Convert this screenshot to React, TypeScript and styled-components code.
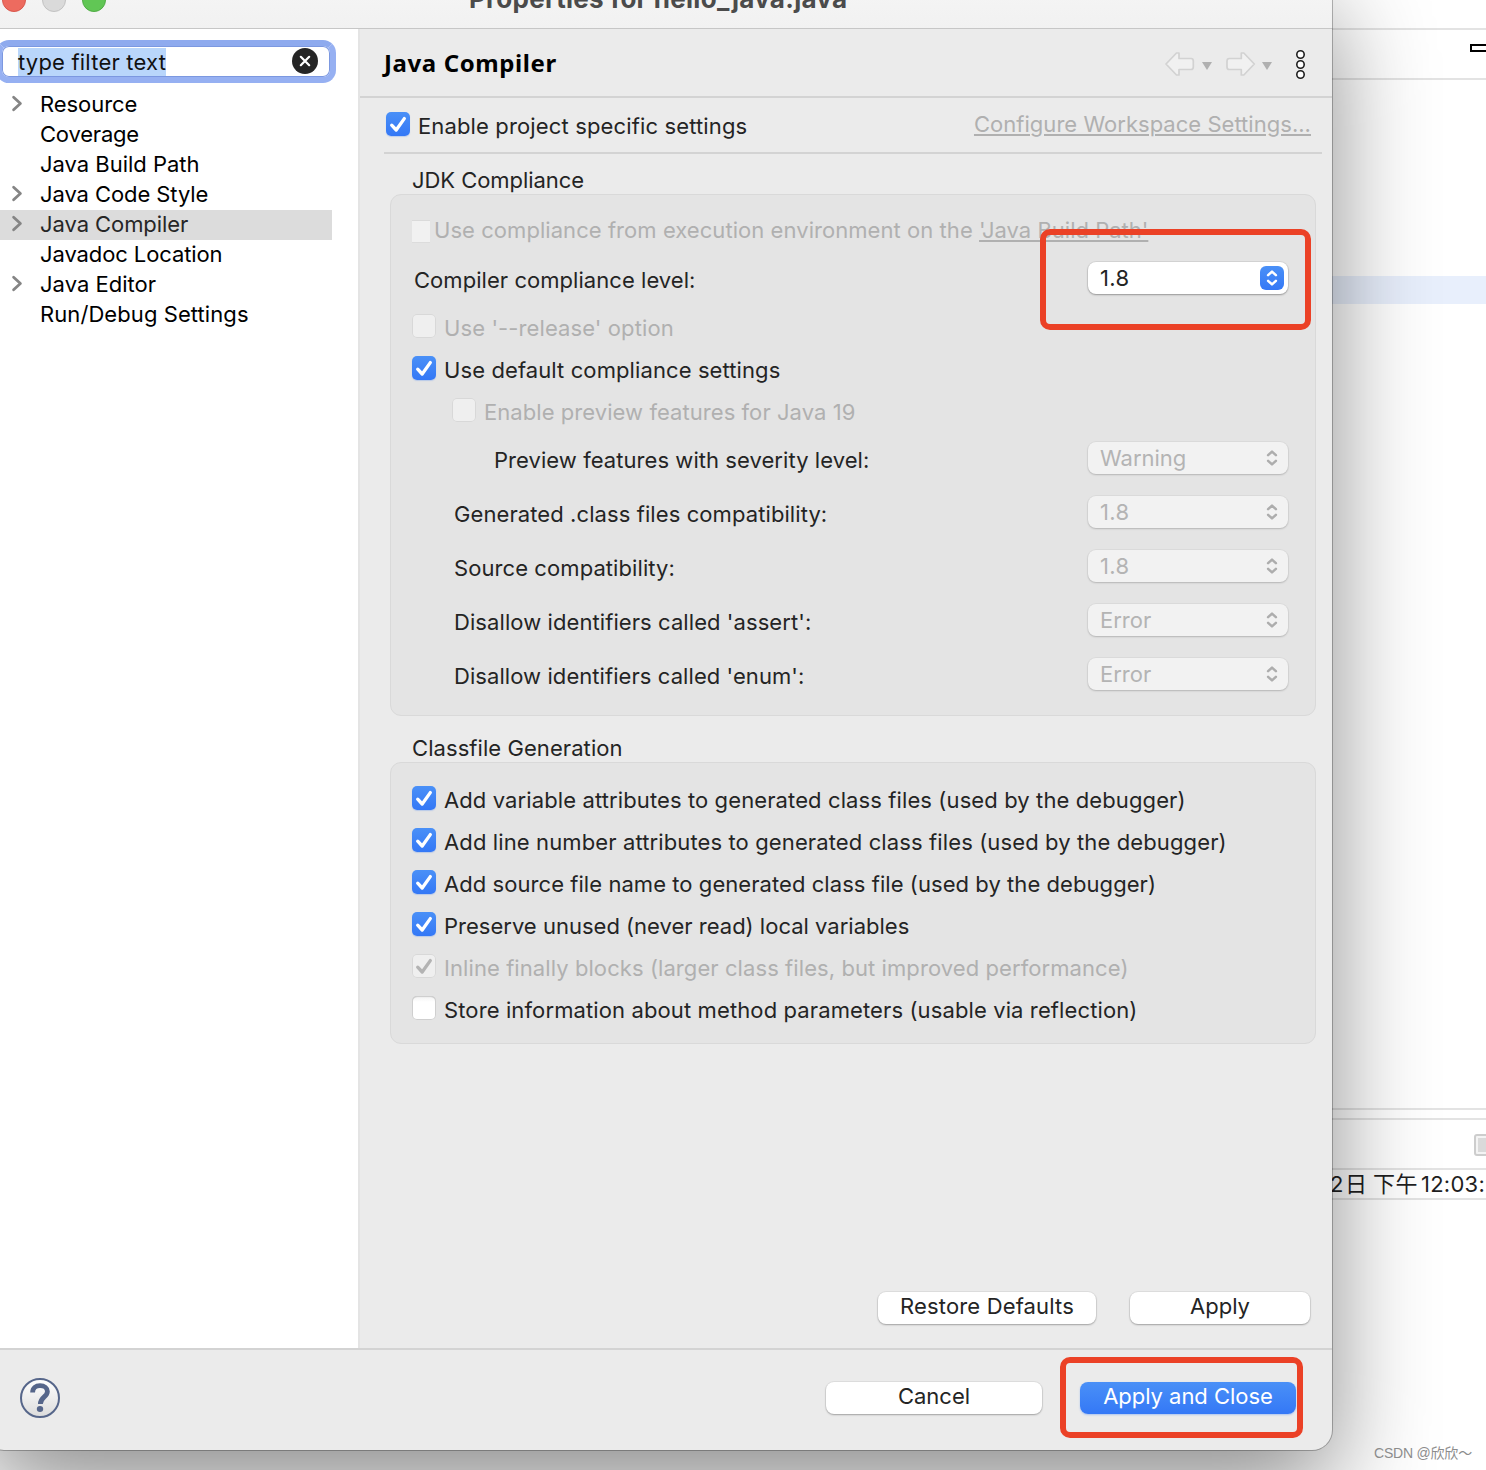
import React from 'react';
import styled, { createGlobalStyle } from 'styled-components';

const uiFont = 'Inter, "Noto Sans CJK SC", sans-serif';

const GlobalStyle = createGlobalStyle`
  *, *::before, *::after { box-sizing: border-box; }
  body { margin: 0; background: #ffffff; overflow: hidden; }
`;

/* ---------- desktop ---------- */

const Desktop = styled.div`
  position: relative;
  width: 1486px;
  height: 1470px;
  overflow: hidden;
  background: #ffffff;
  font: 400 22px/28px ${uiFont};
  color: #242424;
  white-space: nowrap;
`;

const Workbench = styled.div`
  display: flex;
  flex-direction: column;
  margin-left: 1320px;
  height: 1470px;
`;

const WorkbenchRow = styled.div<{ $h: number; $line?: boolean; $bg?: string }>`
  flex: none;
  display: flex;
  justify-content: flex-end;
  height: ${(p) => p.$h}px;
  background: ${(p) => p.$bg ?? 'transparent'};
  border-bottom: ${(p) => (p.$line ? '2px solid #e3e3e3' : 'none')};
`;

const MinimizeIcon = styled.svg`
  width: 16px;
  height: 8px;
  margin-top: 14px;
`;

const ToolIcon = styled.svg`
  width: 12px;
  height: 22px;
  margin-top: 14px;
`;

const ConsoleText = styled.div`
  display: flex;
  width: 156px;
  color: #1f1f1f;
`;

const ConsolePart = styled.span<{ $w?: number; $ls?: number }>`
  width: ${(p) => (p.$w ? `${p.$w}px` : 'auto')};
  letter-spacing: ${(p) => p.$ls ?? 0}px;
  line-height: 28px;
`;

const Watermark = styled.div`
  position: absolute;
  left: 1374px;
  top: 1443px;
  font: 400 14px/20px "Liberation Sans", "Noto Sans CJK SC", sans-serif;
  color: #8c8c8c;
  letter-spacing: -0.2px;
`;

/* ---------- dialog window ---------- */

const Dialog = styled.div`
  position: absolute;
  left: -16px;
  top: -24px;
  width: 1348px;
  height: 1474px;
  display: flex;
  flex-direction: column;
  background: #ebebeb;
  border-radius: 20px;
  box-shadow: 0 0 0 1px rgba(0, 0, 0, 0.26), 0 36px 100px rgba(0, 0, 0, 0.46);
`;

const TitleBar = styled.div`
  flex: none;
  display: flex;
  align-items: center;
  height: 53px;
  padding: 0 0 4px 18px;
  border-radius: 20px 20px 0 0;
  background: linear-gradient(#f6f6f6, #f1f1f1);
  border-bottom: 1px solid #c6c6c6;
`;

const Light = styled.span<{ $fill: string; $edge: string }>`
  width: 24px;
  height: 24px;
  margin-right: 16px;
  border-radius: 50%;
  background: ${(p) => p.$fill};
  border: 1px solid ${(p) => p.$edge};
`;

const Title = styled.div`
  margin: 0 0 2px 347px;
  font-size: 26px;
  font-weight: 700;
  line-height: 32px;
  letter-spacing: 0.26px;
  color: #4b4b4b;
`;

const Body = styled.div`
  flex: none;
  display: flex;
  height: 1319px;
  padding-left: 16px;
  background: #ffffff;
`;

const Sidebar = styled.div`
  flex: none;
  width: 358px;
  padding-top: 11px;
`;

const SearchField = styled.div`
  display: flex;
  align-items: center;
  justify-content: space-between;
  width: 340px;
  height: 43px;
  margin-left: -4px;
  padding: 0 12px 0 16px;
  background: #ffffff;
  border: 6px solid #96b0f2;
  border-top-color: #8eaaee;
  border-radius: 13px;
  box-shadow: inset 0 0 0 1px #7c98e0;
`;

const SearchText = styled.span`
  height: 28px;
  background: #b9d6fb;
  color: #111111;
  letter-spacing: 0.2px;
`;

const ClearIcon = styled.svg`
  width: 26px;
  height: 26px;
  margin-top: -2px;
`;

const Tree = styled.div`
  display: flex;
  flex-direction: column;
  margin-top: 7px;
`;

const TreeRow = styled.div<{ $selected?: boolean }>`
  display: flex;
  width: 332px;
  height: 30px;
  background: ${(p) => (p.$selected ? '#dcdcdc' : 'transparent')};
  color: ${(p) => (p.$selected ? '#262626' : '#000000')};
`;

const TreeArrow = styled.svg`
  flex: none;
  width: 40px;
  height: 30px;
`;

const Text = styled.span<{ $ls?: number; $dim?: boolean; $link?: boolean }>`
  letter-spacing: ${(p) => p.$ls ?? 0.06}px;
  color: ${(p) => (p.$dim ? '#b0b0b0' : 'inherit')};
  text-decoration: ${(p) => (p.$link ? 'underline' : 'none')};
  text-decoration-thickness: 2px;
  text-underline-offset: 2px;
  text-decoration-skip-ink: auto;
`;

const Page = styled.div`
  flex: 1;
  display: flex;
  flex-direction: column;
  background: #ebebeb;
  border-left: 2px solid #e4e4e4;
`;

const PageHeader = styled.div`
  flex: none;
  display: flex;
  justify-content: space-between;
  height: 69px;
  padding-left: 24px;
  border-bottom: 2px solid #d3d3d3;
`;

const PageTitle = styled.h1`
  margin: 17px 0 0;
  font: 700 24px/34px "Noto Sans", sans-serif;
  letter-spacing: 0.6px;
  color: #000000;
`;

const HeaderTools = styled.svg`
  width: 172px;
  height: 62px;
`;

const EnableRow = styled.div`
  flex: none;
  display: flex;
  justify-content: space-between;
  height: 56px;
  margin: 0 10px 0 24px;
  padding: 14px 11px 0 2px;
  border-bottom: 2px solid #d3d3d3;
`;

const LinkSlot = styled.div`
  margin-top: -2px;
`;

const GroupTitle = styled.div<{ $top: number }>`
  margin: ${(p) => p.$top}px 0 0 52px;
  height: 28px;
`;

const GroupBox = styled.div<{ $h: number }>`
  flex: none;
  display: flex;
  flex-direction: column;
  width: 926px;
  height: ${(p) => p.$h}px;
  margin-left: 30px;
  padding: 0 27px 0 21px;
  background: #e4e4e4;
  border: 1px solid #d9d9d9;
  border-radius: 11px;
`;

const CheckRow = styled.div<{ $top?: number; $indent?: number }>`
  display: flex;
  gap: 8px;
  height: 28px;
  margin-top: ${(p) => p.$top ?? 0}px;
  margin-left: ${(p) => p.$indent ?? 0}px;
`;

const EnvRow = styled(CheckRow)`
  gap: 4px;
`;

const EnvBox = styled.span`
  width: 18px;
  height: 23px;
  margin-top: 4px;
  background: #f1f1f1;
  border-top: 1px solid #dadada;
  border-bottom: 1px solid #dcdcdc;
`;

const Box = styled.span<{ $on?: boolean; $dim?: boolean }>`
  flex: none;
  display: flex;
  width: 24px;
  height: 24px;
  border-radius: 5px;
  background: ${(p) =>
    p.$dim
      ? '#efefef'
      : p.$on
        ? 'linear-gradient(#4a90f7, #3478f6)'
        : 'linear-gradient(#f2f2f2, #ffffff 6px)'};
  box-shadow: ${(p) =>
    p.$dim
      ? 'inset 0 0 0 1px #d8d8d8'
      : p.$on
        ? '0 1px 1px rgba(52, 120, 246, 0.25)'
        : 'inset 0 0 0 1px #cfcfcf, inset 0 1px 1px #bdbdbd'};
`;

const FieldRow = styled.div<{ $top: number; $indent?: number; $drop: number }>`
  display: flex;
  justify-content: space-between;
  height: 32px;
  margin-top: ${(p) => p.$top}px;
  padding-left: ${(p) => p.$indent ?? 0}px;

  > span {
    margin-top: ${(p) => p.$drop}px;
  }
`;

const Combo = styled.div<{ $dim?: boolean; $ls?: number }>`
  display: flex;
  justify-content: space-between;
  width: 200px;
  height: 32px;
  padding: 2px 4px 2px 12px;
  border-radius: 8px;
  letter-spacing: ${(p) => p.$ls ?? 0}px;
  background: ${(p) => (p.$dim ? '#f2f2f2' : '#ffffff')};
  color: ${(p) => (p.$dim ? '#b4b4b4' : '#242424')};
  box-shadow: 0 0 0 1px rgba(0, 0, 0, ${(p) => (p.$dim ? 0.03 : 0.06)}),
    0 1px 2px rgba(0, 0, 0, ${(p) => (p.$dim ? 0.18 : 0.3)});
`;

const Stepper = styled.svg<{ $dim?: boolean }>`
  width: 24px;
  height: 24px;
  margin-top: 2px;
  border-radius: 6px;
  background: ${(p) => (p.$dim ? 'none' : 'linear-gradient(#4a90f7, #3478f6)')};
`;

const PageButtons = styled.div`
  display: flex;
  justify-content: flex-end;
  gap: 34px;
  margin: auto 22px 24px 0;
`;

const Button = styled.button<{ $w: number; $primary?: boolean; $ls?: number }>`
  width: ${(p) => p.$w}px;
  height: 32px;
  padding: 0 0 4px;
  border: 0;
  border-radius: 8px;
  font: inherit;
  letter-spacing: ${(p) => p.$ls ?? 0}px;
  color: ${(p) => (p.$primary ? '#ffffff' : '#242424')};
  background: ${(p) => (p.$primary ? 'linear-gradient(#4a90f7, #3478f6)' : '#ffffff')};
  box-shadow: ${(p) =>
    p.$primary
      ? '0 1px 2px rgba(52, 120, 246, 0.35)'
      : '0 0 0 1px rgba(0, 0, 0, 0.05), 0 1px 2px rgba(0, 0, 0, 0.28)'};
`;

const Footer = styled.div`
  flex: 1;
  display: flex;
  justify-content: space-between;
  padding: 28px 36px 0 36px;
  border-top: 2px solid #d3d3d3;
`;

const HelpIcon = styled.svg`
  width: 40px;
  height: 40px;
`;

const FooterButtons = styled.div`
  display: flex;
  gap: 38px;
  margin-top: 4px;
`;

/* ---------- hand-drawn marks over the dialog ---------- */

const Highlight = styled.div<{ $x: number; $y: number; $w: number; $h: number }>`
  position: absolute;
  left: ${(p) => p.$x}px;
  top: ${(p) => p.$y}px;
  width: ${(p) => p.$w}px;
  height: ${(p) => p.$h}px;
  border: 6px solid #eb4126;
  border-radius: 10px;
`;

/* ---------- parts ---------- */

const CheckBox = ({ on, dim }: { on?: boolean; dim?: boolean }) => (
  <Box $on={on} $dim={dim}>
    {on && (
      <svg width="24" height="24" viewBox="0 0 24 24" fill="none">
        <path
          d="M5.7 13.2 L10.2 18 L18.3 6.6"
          stroke={dim ? '#b3b3b3' : '#ffffff'}
          strokeWidth="3.3"
          strokeLinecap="round"
          strokeLinejoin="round"
        />
      </svg>
    )}
  </Box>
);

type CheckProps = {
  label: string;
  on?: boolean;
  dim?: boolean;
  top?: number;
  indent?: number;
  ls?: number;
};

const Check = ({ label, on, dim, top, indent, ls }: CheckProps) => (
  <CheckRow $top={top} $indent={indent}>
    <CheckBox on={on} dim={dim} />
    <Text $dim={dim} $ls={ls}>{label}</Text>
  </CheckRow>
);

const Select = ({ value, dim }: { value: string; dim?: boolean }) => (
  <Combo $dim={dim} $ls={value === '1.8' ? 0.3 : 0}>
    {value}
    <Stepper
      $dim={dim}
      viewBox="0 0 24 24"
      fill="none"
      stroke={dim ? '#adadad' : '#ffffff'}
      strokeWidth="2.5"
      strokeLinecap="round"
      strokeLinejoin="round"
    >
      <path d="M8.1 9.2 L12 5.6 L15.9 9.2 M8.1 14.8 L12 18.4 L15.9 14.8" />
    </Stepper>
  </Combo>
);

const treeItems = [
  { label: 'Resource', branch: true, ls: -0.05 },
  { label: 'Coverage', ls: -0.2 },
  { label: 'Java Build Path', ls: -0.02 },
  { label: 'Java Code Style', branch: true, ls: -0.08 },
  { label: 'Java Compiler', branch: true, selected: true, ls: -0.07 },
  { label: 'Javadoc Location', ls: -0.1 },
  { label: 'Java Editor', branch: true, ls: 0.02 },
  { label: 'Run/Debug Settings', ls: 0.08 },
];

const compatibilityFields = [
  { label: 'Generated .class files compatibility:', value: '1.8', ls: 0.09 },
  { label: 'Source compatibility:', value: '1.8', ls: 0.08 },
  { label: "Disallow identifiers called 'assert':", value: 'Error', ls: 0.08 },
  { label: "Disallow identifiers called 'enum':", value: 'Error', ls: 0.07 },
];

const classfileOptions = [
  { label: 'Add variable attributes to generated class files (used by the debugger)', on: true, ls: 0.11 },
  { label: 'Add line number attributes to generated class files (used by the debugger)', on: true, ls: 0.12 },
  { label: 'Add source file name to generated class file (used by the debugger)', on: true, ls: 0.06 },
  { label: 'Preserve unused (never read) local variables', on: true, ls: 0.01 },
  { label: 'Inline finally blocks (larger class files, but improved performance)', on: true, dim: true, ls: 0.08 },
  { label: 'Store information about method parameters (usable via reflection)', ls: 0.115 },
];

export default function App() {
  return (
    <>
      <GlobalStyle />
      <Desktop>
        <Workbench>
          <WorkbenchRow $h={30} $line />
          <WorkbenchRow $h={50} $line>
            <MinimizeIcon viewBox="0 0 16 8">
              <rect x="1" y="1" width="18" height="6" fill="none" stroke="#000" strokeWidth="2" />
            </MinimizeIcon>
          </WorkbenchRow>
          <WorkbenchRow $h={196} />
          <WorkbenchRow $h={28} $bg="#e8effc" />
          <WorkbenchRow $h={806} $line />
          <WorkbenchRow $h={10} $line />
          <WorkbenchRow $h={50} $line>
            <ToolIcon viewBox="0 0 12 22">
              <rect x="1" y="1" width="20" height="20" rx="2" fill="#f4f4f4" stroke="#cdcdcd" strokeWidth="2" />
              <rect x="4" y="4" width="12" height="14" fill="#dadada" />
            </ToolIcon>
          </WorkbenchRow>
          <WorkbenchRow $h={30} $line>
            <ConsoleText>
              <ConsolePart $w={15}>2</ConsolePart>
              <ConsolePart $w={28}>日</ConsolePart>
              <ConsolePart $w={48} $ls={0.5}>下午</ConsolePart>
              <ConsolePart $ls={0.25}>12:03:</ConsolePart>
            </ConsoleText>
          </WorkbenchRow>
        </Workbench>

        <Dialog>
          <TitleBar>
            <Light $fill="#ed6b5f" $edge="#d9574c" />
            <Light $fill="#dadada" $edge="#c2c2c2" />
            <Light $fill="#61c655" $edge="#50ac45" />
            <Title>Properties for hello_java.java</Title>
          </TitleBar>

          <Body>
            <Sidebar>
              <SearchField>
                <SearchText>type filter text</SearchText>
                <ClearIcon viewBox="0 0 26 26">
                  <circle cx="13" cy="13" r="13" fill="#252525" />
                  <path d="M8.8 8.8 L17.2 17.2 M17.2 8.8 L8.8 17.2" stroke="#fff" strokeWidth="2.2" strokeLinecap="round" />
                </ClearIcon>
              </SearchField>
              <Tree>
                {treeItems.map((item) => (
                  <TreeRow key={item.label} $selected={item.selected}>
                    <TreeArrow viewBox="0 0 40 30">
                      {item.branch && (
                        <path
                          d="M13.6 7.2 L20.4 13.5 L13.6 19.8"
                          fill="none"
                          stroke="#858585"
                          strokeWidth="2.8"
                          strokeLinecap="round"
                          strokeLinejoin="round"
                        />
                      )}
                    </TreeArrow>
                    <Text $ls={item.ls}>{item.label}</Text>
                  </TreeRow>
                ))}
              </Tree>
            </Sidebar>

            <Page>
              <PageHeader>
                <PageTitle>Java Compiler</PageTitle>
                <HeaderTools viewBox="1160 29 172 62">
                  <g fill="#f1f1f1" stroke="#d2d2d2" strokeWidth="1.7" strokeLinejoin="round">
                    <path d="M1166 64 L1176.5 53 H1179 V58.5 H1191 Q1193.3 58.5 1193.3 61 V67 Q1193.3 69.5 1191 69.5 H1179 V75 H1176.5 Z" />
                    <path d="M1254.3 64 L1243.8 53 H1241.3 V58.5 H1229.3 Q1227 58.5 1227 61 V67 Q1227 69.5 1229.3 69.5 H1241.3 V75 H1243.8 Z" />
                  </g>
                  <g fill="#b0b0b0">
                    <path d="M1202 62 H1212 L1207 70 Z" />
                    <path d="M1262 62 H1272 L1267 70 Z" />
                  </g>
                  <g fill="#ffffff" stroke="#1e1e1e" strokeWidth="1.6">
                    <circle cx="1300.5" cy="54.5" r="3.7" />
                    <circle cx="1300.5" cy="64.5" r="3.7" />
                    <circle cx="1300.5" cy="74.5" r="3.7" />
                  </g>
                </HeaderTools>
              </PageHeader>

              <EnableRow>
                <Check label="Enable project specific settings" on ls={0.14} />
                <LinkSlot>
                  <Text $dim $link $ls={0.03}>Configure Workspace Settings...</Text>
                </LinkSlot>
              </EnableRow>

              <GroupTitle $top={12}><Text $ls={-0.06}>JDK Compliance</Text></GroupTitle>
              <GroupBox $h={522}>
                <EnvRow $top={21}>
                  <EnvBox />
                  <Text $dim $ls={0.055}>
                    Use compliance from execution environment on the{' '}
                    <Text $link $ls={0}>'Java Build Path'</Text>
                  </Text>
                </EnvRow>
                <FieldRow $top={18} $indent={2} $drop={4}>
                  <Text $ls={0.05}>Compiler compliance level:</Text>
                  <Select value="1.8" />
                </FieldRow>
                <Check label="Use '--release' option" dim top={20} ls={0.1} />
                <Check label="Use default compliance settings" on top={14} ls={0.1} />
                <Check label="Enable preview features for Java 19" dim top={14} indent={40} ls={0.06} />
                <FieldRow $top={16} $indent={82} $drop={4}>
                  <Text $ls={0.06}>Preview features with severity level:</Text>
                  <Select value="Warning" dim />
                </FieldRow>
                {compatibilityFields.map((field) => (
                  <FieldRow key={field.label} $top={22} $indent={42} $drop={4}>
                    <Text $ls={field.ls}>{field.label}</Text>
                    <Select value={field.value} dim />
                  </FieldRow>
                ))}
              </GroupBox>

              <GroupTitle $top={18}><Text $ls={0.07}>Classfile Generation</Text></GroupTitle>
              <GroupBox $h={282}>
                {classfileOptions.map((option, i) => (
                  <Check key={option.label} {...option} top={i === 0 ? 23 : 14} />
                ))}
              </GroupBox>

              <PageButtons>
                <Button $w={218} $ls={0.15}>Restore Defaults</Button>
                <Button $w={180}>Apply</Button>
              </PageButtons>
            </Page>
          </Body>

          <Footer>
            <HelpIcon viewBox="0 0 40 40">
              <defs>
                <linearGradient id="help" x1="0" y1="0" x2="0" y2="1">
                  <stop offset="0" stopColor="#ffffff" />
                  <stop offset="1" stopColor="#dcdcdc" />
                </linearGradient>
              </defs>
              <circle cx="20" cy="20" r="19" fill="url(#help)" stroke="#56668a" strokeWidth="2" />
              <path
                d="M12.6 14.6 C12.6 9.6 16 7.6 20 7.6 C24.4 7.6 27.4 10.2 27.4 13.4 C27.4 19 20.4 19 20.4 26"
                fill="none"
                stroke="#56668a"
                strokeWidth="4.8"
              />
              <ellipse cx="20" cy="31" rx="3.2" ry="3" fill="#56668a" />
            </HelpIcon>
            <FooterButtons>
              <Button $w={216}>Cancel</Button>
              <Button $w={216} $primary $ls={-0.04}>Apply and Close</Button>
            </FooterButtons>
          </Footer>
        </Dialog>

        <Highlight $x={1040} $y={229} $w={271} $h={101} />
        <Highlight $x={1060} $y={1357} $w={243} $h={81} />
        <Watermark>CSDN @欣欣～</Watermark>
      </Desktop>
    </>
  );
}
